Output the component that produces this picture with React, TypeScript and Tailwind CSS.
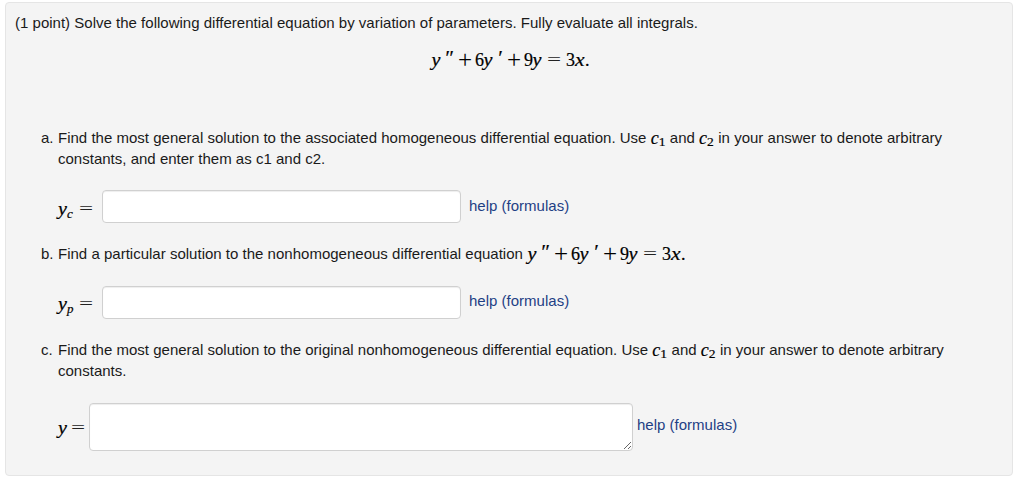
import React from 'react';

const serif = "font-['Liberation_Serif',serif] text-black [-webkit-text-stroke:0.2px_#000]";

function Plus() {
  return (
    <span className="inline-block w-[17px] text-[25px] leading-[0] relative top-[2px] [-webkit-text-stroke:0px]">
      +
    </span>
  );
}

function Equals() {
  return (
    <span className="inline-block w-[19px] text-[25px] leading-[20px] h-[20px] scale-y-[0.65] relative top-[2px] text-[#222] [-webkit-text-stroke:0px]">
      =
    </span>
  );
}

function Equation() {
  return (
    <span className={`${serif} relative -top-[1px] inline-flex items-baseline h-5 text-[18px] leading-5 whitespace-nowrap`}>
      <i className="w-[12px]"><span className="inline-block scale-x-[1.12]">y</span></i>
      <i className="w-[14px] relative -top-[1px] text-[21px] leading-[0]">″</i>
      <Plus />
      <span className="w-[9px]">6</span>
      <i className="w-[13px]"><span className="inline-block scale-x-[1.12]">y</span></i>
      <i className="w-[10px] relative -top-[1px] text-[21px] leading-[0]">′</i>
      <Plus />
      <span className="w-[9px]">9</span>
      <i className="w-[14px]"><span className="inline-block scale-x-[1.12]">y</span></i>
      <Equals />
      <span className="w-[9px]">3</span>
      <i className="w-[10px]"><span className="inline-block origin-left scale-x-[1.2]">x</span></i>
      <span>.</span>
    </span>
  );
}

function Constant({ index }: { index: number }) {
  return (
    <span className={`${serif} inline-flex items-baseline w-[15px] text-[18px] leading-[14px]`}>
      <i className="w-[8px] relative top-[1px]">c</i>
      <span className="relative top-[3px] text-[13.5px]">{index}</span>
    </span>
  );
}

function Label({ sub }: { sub?: string }) {
  return (
    <span className={`${serif} relative -top-[1px] inline-flex items-baseline h-5 text-[18px] leading-5`}>
      <i className={sub ? 'w-[9px]' : 'w-[13px]'}>
        <span className="inline-block origin-left scale-x-[1.12]">y</span>
      </i>
      {sub && <i className="w-[12px] relative top-[3px] text-[13px]">{sub}</i>}
      <Equals />
    </span>
  );
}

function HelpLink() {
  return (
    <a href="#" className="text-[#1f3f85] leading-[21px]">
      help (formulas)
    </a>
  );
}

const inputStyle =
  'block bg-white border border-[#d0d0d0] rounded shadow-[inset_0_1px_1px_rgba(0,0,0,0.07)] outline-none';

export default function App() {
  return (
    <div className="w-[1024px] h-[484px] bg-white pt-[2px] pl-[5px] font-['Liberation_Sans',Arial,sans-serif] text-[15px] tracking-[0.01px] leading-[21px] text-[#1a1a1a] overflow-hidden">
      <div className="w-[1008px] h-[474px] bg-[#f4f4f4] border border-[#e5e5e5] rounded pt-[9px] pl-[9px] whitespace-nowrap">
        <p>(1 point) Solve the following differential equation by variation of parameters. Fully evaluate all integrals.</p>
        <div className="flex mt-[16px] pl-[417px]">
          <Equation />
        </div>

        <div className="flex mt-[58px] pl-[26px]">
          <span className="w-[17px]">a.</span>
          <div>
            <div className="h-[21px]">
              Find the most general solution to the associated homogeneous differential equation. Use{' '}
              <Constant index={1} /> and <Constant index={2} /> in your answer to denote arbitrary
            </div>
            <div>constants, and enter them as c1 and c2.</div>
          </div>
        </div>
        <div className="flex h-[33px] mt-[21px] pl-[43px]">
          <div className="w-[44px] pt-[8px]"><Label sub="c" /></div>
          <input className={`${inputStyle} w-[359px] h-[33px]`} />
          <div className="pl-[8px] pt-[5px]"><HelpLink /></div>
        </div>

        <div className="flex h-[21px] mt-[20px] pl-[26px]">
          <span className="w-[17px]">b.</span>
          <div className="w-[470px]">Find a particular solution to the nonhomogeneous differential equation</div>
          <Equation />
        </div>
        <div className="flex h-[33px] mt-[22px] pl-[43px]">
          <div className="w-[44px] pt-[7px]"><Label sub="p" /></div>
          <input className={`${inputStyle} w-[359px] h-[33px]`} />
          <div className="pl-[8px] pt-[4px]"><HelpLink /></div>
        </div>

        <div className="flex mt-[20px] pl-[26px]">
          <span className="w-[17px]">c.</span>
          <div>
            <div className="h-[21px]">
              Find the most general solution to the original nonhomogeneous differential equation. Use{' '}
              <Constant index={1} /> and <Constant index={2} /> in your answer to denote arbitrary
            </div>
            <div>constants.</div>
          </div>
        </div>
        <div className="flex h-[48px] mt-[22px] pl-[43px]">
          <div className="w-[31px] pt-[14px]"><Label /></div>
          <textarea className={`${inputStyle} w-[544px] h-[48px] resize`} />
          <div className="pl-[4px] pt-[11px]"><HelpLink /></div>
        </div>
      </div>
    </div>
  );
}
